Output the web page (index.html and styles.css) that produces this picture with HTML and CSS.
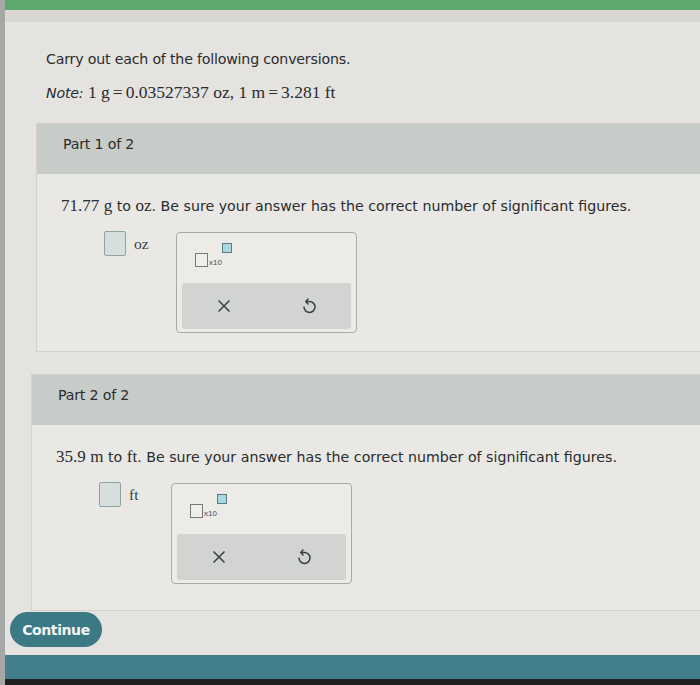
FILE: index.html
```html
<!DOCTYPE html>
<html>
<head>
<meta charset="utf-8">
<link rel="stylesheet" href="styles.css">
</head>
<body>
<div class="frame">
  <div class="topbar"></div>
  <div class="subbar"></div>
  <main class="content">
    <p class="intro">Carry out each of the following conversions.</p>
    <p class="note"><span class="note-label">Note:</span> <span class="math note-math">1 g<span class="eq">=</span>0.03527337 oz, 1 m<span class="eq">=</span>3.281 ft</span></p>

    <section class="part part-1">
      <div class="part-head">Part 1 of 2</div>
      <div class="part-body">
        <p class="question"><span class="math">71.77</span> <span class="math">g</span> to <span class="math">oz</span>. Be sure your answer has the correct number of significant figures.</p>
        <div class="answer-row">
          <div class="answer">
            <span class="answer-box"></span>
            <span class="unit math">oz</span>
          </div>
          <div class="tools">
            <div class="sci">
              <span class="sci-base"></span><span class="sci-x">x10</span><span class="sci-exp"></span>
            </div>
            <div class="tool-bar">
              <svg class="icon" width="16" height="16" viewBox="0 0 16 16"><path d="M2.5 2.5 L13.5 13.5 M13.5 2.5 L2.5 13.5" stroke="#3c3f40" stroke-width="1.5" fill="none"/></svg>
              <svg class="icon" width="16" height="18" viewBox="0 0 16 18"><path d="M5 4.5 L8.5 4.5 A5.5 5.5 0 1 1 3 10" stroke="#3c3f40" stroke-width="1.5" fill="none" stroke-linecap="round"/><path d="M7 2 L4.8 4.5 L7 7" stroke="#3c3f40" stroke-width="1.5" fill="none" stroke-linecap="round" stroke-linejoin="round"/></svg>
            </div>
          </div>
        </div>
      </div>
    </section>

    <section class="part part-2">
      <div class="part-head">Part 2 of 2</div>
      <div class="part-body">
        <p class="question"><span class="math">35.9</span> <span class="math">m</span> to <span class="math">ft</span>. Be sure your answer has the correct number of significant figures.</p>
        <div class="answer-row">
          <div class="answer">
            <span class="answer-box"></span>
            <span class="unit math">ft</span>
          </div>
          <div class="tools">
            <div class="sci">
              <span class="sci-base"></span><span class="sci-x">x10</span><span class="sci-exp"></span>
            </div>
            <div class="tool-bar">
              <svg class="icon" width="16" height="16" viewBox="0 0 16 16"><path d="M2.5 2.5 L13.5 13.5 M13.5 2.5 L2.5 13.5" stroke="#3c3f40" stroke-width="1.5" fill="none"/></svg>
              <svg class="icon" width="16" height="18" viewBox="0 0 16 18"><path d="M5 4.5 L8.5 4.5 A5.5 5.5 0 1 1 3 10" stroke="#3c3f40" stroke-width="1.5" fill="none" stroke-linecap="round"/><path d="M7 2 L4.8 4.5 L7 7" stroke="#3c3f40" stroke-width="1.5" fill="none" stroke-linecap="round" stroke-linejoin="round"/></svg>
            </div>
          </div>
        </div>
      </div>
    </section>

    <div class="footer">
      <button class="continue">Continue</button>
    </div>
  </main>
  <div class="bottombar"></div>
  <div class="bottomdark"></div>
</div>
</body>
</html>
```

FILE: styles.css
```css
* { box-sizing: border-box; }
html, body { margin: 0; padding: 0; }
body {
  width: 700px;
  height: 685px;
  overflow: hidden;
  background: #1d1e1f;
  font-family: "DejaVu Sans", Verdana, sans-serif;
  color: #2a2c2d;
}
.frame {
  height: 685px;
  display: flex;
  flex-direction: column;
  background: #e4e3df;
  border-left: 5px solid #a6a7a7;
}
.topbar { height: 10px; background: #5ea86b; flex: none; }
.subbar { height: 12px; background: #d8d7d3; flex: none; }
.content {
  flex: 1;
  display: flex;
  flex-direction: column;
}
.intro {
  margin: 27px 0 0 41px;
  font-size: 14.2px;
  letter-spacing: -0.2px;
  line-height: 20px;
}
.note {
  margin: 13px 0 0 41px;
  font-size: 14.2px;
  line-height: 20px;
}
.note-label { font-style: italic; letter-spacing: -0.2px; }
.math { font-family: "Liberation Serif", "Times New Roman", serif; font-size: 17px; }
.note-math { font-size: 17.5px; }
.eq { margin: 0 3px; }

.part {
  margin-left: 31px;
  border: 1px solid #d2d2ce;
  border-right: none;
  background: #e9e8e4;
}
.part-1 { margin-top: 20px; }
.part-2 { margin-top: 22px; margin-left: 26px; }
.part-head {
  height: 50px;
  background: #c8ccc9;
  padding: 12px 0 0 26px;
  font-size: 14.2px;
  letter-spacing: -0.2px;
}
.part-body { padding: 22px 0 18px 24px; }
.part-2 .part-body { padding-bottom: 26px; }
.question {
  margin: 0;
  font-size: 14.2px;
  letter-spacing: 0;
  line-height: 20px;
}
.answer-row {
  display: flex;
  align-items: flex-start;
  margin-top: 15px;
  margin-left: 43px;
}
.answer {
  display: flex;
  align-items: center;
  gap: 8px;
  width: 72px;
}
.answer-box {
  width: 22px;
  height: 25px;
  background: #d6dfde;
  border: 1.5px solid #8ea3a3;
  border-radius: 2px;
}
.unit { font-size: 15.5px; color: #3a3c3d; }

.tools {
  width: 181px;
  height: 101px;
  margin-top: 1px;
  border: 1px solid #a8aaa8;
  border-radius: 4px;
  background: #ecebe7;
  display: flex;
  flex-direction: column;
  padding: 10px 5px 3px 5px;
}
.sci {
  display: flex;
  align-items: flex-end;
  height: 24px;
  margin-left: 13px;
}
.sci-base {
  width: 13px;
  height: 14px;
  border: 1.3px solid #77797a;
  background: #eeeeea;
}
.sci-x {
  font-family: "Liberation Sans", Arial, sans-serif;
  font-size: 8px;
  color: #4a4c4d;
  line-height: 9px;
  margin-left: 1px;
}
.sci-exp {
  width: 10px;
  height: 10px;
  border: 1.3px solid #5c7c84;
  background: #a9d7df;
  align-self: flex-start;
  margin-left: 0px;
}
.tool-bar {
  margin-top: auto;
  height: 46px;
  background: #d2d4d2;
  border-radius: 3px;
  display: flex;
  align-items: center;
  justify-content: center;
  gap: 69px;
}
.icon { display: block; }

.footer {
  margin-top: auto;
  padding: 0 0 8px 5px;
}
.continue {
  width: 92px;
  height: 35px;
  border: none;
  border-radius: 18px;
  background: #3b7985;
  color: #f4f6f6;
  font-family: "DejaVu Sans", Verdana, sans-serif;
  font-weight: bold;
  font-size: 14px;
  letter-spacing: -0.4px;
}
.bottombar { height: 24px; background: #437f8b; flex: none; }
.bottomdark { height: 6px; background: #202122; flex: none; }
```
